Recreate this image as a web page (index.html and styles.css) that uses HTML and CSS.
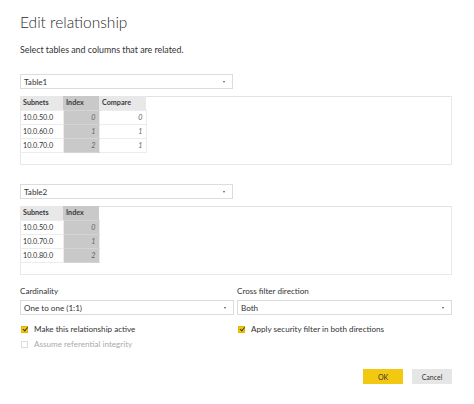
FILE: index.html
```html
<!DOCTYPE html>
<html>
<head>
<meta charset="utf-8">
<link rel="stylesheet" href="styles.css">
</head>
<body>
<div class="dialog">
  <h1 class="title">Edit relationship</h1>
  <p class="subtitle">Select tables and columns that are related.</p>

  <div class="select half"><span>Table1</span><span class="caret"></span></div>
  <div class="preview">
    <table class="grid">
      <tr><th class="c1">Subnets</th><th class="c2 key">Index</th><th class="c3">Compare</th></tr>
      <tr><td>10.0.50.0</td><td class="num key">0</td><td class="num">0</td></tr>
      <tr><td>10.0.60.0</td><td class="num key">1</td><td class="num">1</td></tr>
      <tr><td>10.0.70.0</td><td class="num key">2</td><td class="num">1</td></tr>
    </table>
  </div>

  <div class="select half second"><span>Table2</span><span class="caret"></span></div>
  <div class="preview">
    <table class="grid">
      <tr><th class="c1">Subnets</th><th class="c2 key">Index</th></tr>
      <tr><td>10.0.50.0</td><td class="num key">0</td></tr>
      <tr><td>10.0.70.0</td><td class="num key">1</td></tr>
      <tr><td>10.0.80.0</td><td class="num key">2</td></tr>
    </table>
  </div>

  <div class="options">
    <div class="field">
      <div class="label">Cardinality</div>
      <div class="select"><span>One to one (1:1)</span><span class="caret"></span></div>
      <label class="check"><span class="box on"></span>Make this relationship active</label>
      <label class="check disabled"><span class="box"></span>Assume referential integrity</label>
    </div>
    <div class="field">
      <div class="label">Cross filter direction</div>
      <div class="select"><span>Both</span><span class="caret"></span></div>
      <label class="check"><span class="box on"></span>Apply security filter in both directions</label>
    </div>
  </div>

  <div class="actions">
    <button class="btn primary">OK</button>
    <button class="btn">Cancel</button>
  </div>
</div>
</body>
</html>
```

FILE: styles.css
```css
html, body {
  margin: 0;
  padding: 0;
  background: #ffffff;
}
body {
  font-family: Lato, "Open Sans", sans-serif;
  color: #333333;
  width: 474px;
  height: 404px;
  overflow: hidden;
}
.dialog {
  padding: 11px 22px 0 20px;
}
.title {
  margin: 0;
  font-size: 15.5px;
  line-height: 22px;
  font-weight: 300;
  color: #2b2b2b;
}
.subtitle {
  margin: 11px 0 0 0;
  font-size: 8.85px;
  line-height: 12px;
  color: #333;
}
.select {
  box-sizing: border-box;
  height: 15px;
  border: 1px solid #dcdcdc;
  display: flex;
  align-items: center;
  justify-content: space-between;
  padding: 0 7px 0 3px;
  font-size: 8.1px;
  color: #333;
}
.select.half {
  width: 213px;
  margin-top: 18px;
}
.select.second {
  margin-top: 19px;
}
.caret {
  width: 0;
  height: 0;
  border-left: 1.5px solid transparent;
  border-right: 1.5px solid transparent;
  border-top: 2px solid #555;
}
.preview {
  margin-top: 7px;
  height: 69px;
  box-sizing: border-box;
  border: 1px solid #e8e8e8;
  border-top-color: #e2e2e2;
}
.grid {
  border-collapse: collapse;
  font-size: 7.2px;
  color: #333;
  margin: -1px 0 0 -1px;
}
.grid th, .grid td {
  height: 14px;
  padding: 0 3px;
  box-sizing: border-box;
  border-bottom: 1px solid #ececec;
  text-align: left;
  font-weight: normal;
}
.grid th {
  background: #e8e8e8;
  font-weight: 700;
  color: #3a3a3a;
}
.grid th.key, .grid td.key {
  background: #c9c9c9;
  border-bottom-color: #d4d4d4;
}
.grid .c1 { width: 43px; }
.grid .c2 { width: 36px; }
.grid .c3 { width: 47px; }
.grid td {
  border-right: 1px solid #ececec;
}
.grid td.num {
  text-align: right;
  font-style: italic;
  color: #666;
}
.options {
  margin-top: 11px;
  display: grid;
  grid-template-columns: 214px 215px;
  column-gap: 3px;
}
.label {
  font-size: 8.1px;
  line-height: 11px;
  color: #333;
  margin-bottom: 3px;
}
.check {
  display: flex;
  align-items: center;
  gap: 6px;
  font-size: 8.1px;
  color: #333;
  margin-top: 10px;
  height: 8px;
}
.check + .check {
  margin-top: 7px;
}
.check.disabled {
  color: #aaaaaa;
}
.box {
  width: 7px;
  height: 7px;
  box-sizing: border-box;
  border: 1px solid #dedede;
  background: #fff;
  position: relative;
  flex: none;
  margin-left: 1px;
}
.box.on {
  background: #f2c811;
  border-color: #e0b800;
}
.box.on::after {
  content: "";
  position: absolute;
  left: 1.6px;
  top: -0.3px;
  width: 1.8px;
  height: 3.6px;
  border-right: 1.2px solid #333;
  border-bottom: 1.2px solid #333;
  transform: rotate(40deg);
}
.actions {
  display: flex;
  justify-content: flex-end;
  gap: 9px;
  margin-top: 21px;
}
.btn {
  width: 40px;
  height: 15px;
  border: none;
  padding: 0;
  font-family: inherit;
  font-size: 7px;
  background: #e6e6e6;
  color: #333;
}
.btn.primary {
  background: #f2c811;
}
```
